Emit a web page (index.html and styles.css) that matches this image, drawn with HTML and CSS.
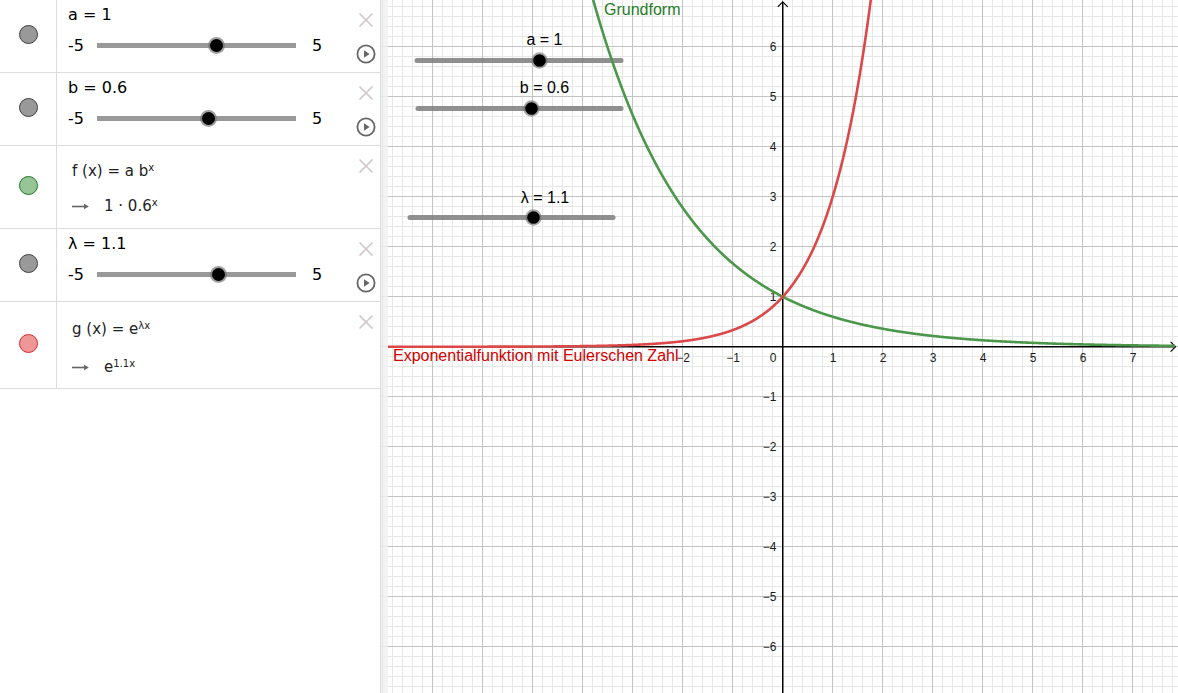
FILE: index.html
```html
<!DOCTYPE html>
<html>
<head>
<meta charset="utf-8">
<title>Exponentialfunktion</title>
<link rel="stylesheet" href="styles.css">
</head>
<body>
<div class="app">
  <div class="algebra">
    <div class="item h73">
      <div class="marble-cell"><span class="marble gray"></span></div>
      <div class="item-main">
        <div class="def">a = 1</div>
        <div class="slider">
          <span class="min">-5</span>
          <span class="track"><span class="knob" style="left:60%"></span></span>
          <span class="max">5</span>
        </div>
      </div>
      <div class="actions">
        <svg class="del" viewBox="0 0 16 16"><path d="M1.5 1.5L14.5 14.5M14.5 1.5L1.5 14.5"/></svg>
        <svg class="play" viewBox="0 0 20 20"><circle cx="10" cy="10" r="8.6"/><path d="M8 6.2L13.6 10L8 13.8Z"/></svg>
      </div>
    </div>
    <div class="item h73">
      <div class="marble-cell"><span class="marble gray"></span></div>
      <div class="item-main">
        <div class="def">b = 0.6</div>
        <div class="slider">
          <span class="min">-5</span>
          <span class="track"><span class="knob" style="left:56%"></span></span>
          <span class="max">5</span>
        </div>
      </div>
      <div class="actions">
        <svg class="del" viewBox="0 0 16 16"><path d="M1.5 1.5L14.5 14.5M14.5 1.5L1.5 14.5"/></svg>
        <svg class="play" viewBox="0 0 20 20"><circle cx="10" cy="10" r="8.6"/><path d="M8 6.2L13.6 10L8 13.8Z"/></svg>
      </div>
    </div>
    <div class="item h83">
      <div class="marble-cell"><span class="marble green"></span></div>
      <div class="item-main">
        <div class="math m1">f (x) = a b<sup>x</sup></div>
        <div class="math m2"><svg class="arrow" viewBox="0 0 17 7"><path class="arrow-line" d="M0 3.5H13"/><path class="arrow-head" d="M12 0.8L16.8 3.5L12 6.2Z"/></svg>1 · 0.6<sup>x</sup></div>
      </div>
      <div class="actions">
        <svg class="del" viewBox="0 0 16 16"><path d="M1.5 1.5L14.5 14.5M14.5 1.5L1.5 14.5"/></svg>
      </div>
    </div>
    <div class="item h73">
      <div class="marble-cell"><span class="marble gray"></span></div>
      <div class="item-main">
        <div class="def">λ = 1.1</div>
        <div class="slider">
          <span class="min">-5</span>
          <span class="track"><span class="knob" style="left:61%"></span></span>
          <span class="max">5</span>
        </div>
      </div>
      <div class="actions">
        <svg class="del" viewBox="0 0 16 16"><path d="M1.5 1.5L14.5 14.5M14.5 1.5L1.5 14.5"/></svg>
        <svg class="play" viewBox="0 0 20 20"><circle cx="10" cy="10" r="8.6"/><path d="M8 6.2L13.6 10L8 13.8Z"/></svg>
      </div>
    </div>
    <div class="item h87">
      <div class="marble-cell"><span class="marble red"></span></div>
      <div class="item-main">
        <div class="math m1 g1">g (x) = e<sup>λx</sup></div>
        <div class="math m2 g2"><svg class="arrow" viewBox="0 0 17 7"><path class="arrow-line" d="M0 3.5H13"/><path class="arrow-head" d="M12 0.8L16.8 3.5L12 6.2Z"/></svg>e<sup>1.1x</sup></div>
      </div>
      <div class="actions">
        <svg class="del" viewBox="0 0 16 16"><path d="M1.5 1.5L14.5 14.5M14.5 1.5L1.5 14.5"/></svg>
      </div>
    </div>
  </div>
  <div class="graphics">
    <svg class="canvas" viewBox="381 0 797 693" xmlns="http://www.w3.org/2000/svg">
      <defs>
        <pattern id="grid" x="782" y="346" width="50" height="50" patternUnits="userSpaceOnUse">
          <rect class="g-bg" width="50" height="50"/>
          <rect class="g-minor" x="10" width="1" height="50"/>
          <rect class="g-minor" x="20" width="1" height="50"/>
          <rect class="g-minor" x="30" width="1" height="50"/>
          <rect class="g-minor" x="40" width="1" height="50"/>
          <rect class="g-minor" y="10" width="50" height="1"/>
          <rect class="g-minor" y="20" width="50" height="1"/>
          <rect class="g-minor" y="30" width="50" height="1"/>
          <rect class="g-minor" y="40" width="50" height="1"/>
          <rect class="g-major" x="0" width="1" height="50"/>
          <rect class="g-major" y="0" width="50" height="1"/>
        </pattern>
      </defs>
      <rect x="381" y="0" width="797" height="693" fill="url(#grid)"/>
      <rect class="strip" x="381" y="0" width="7" height="693"/>

      <line class="axis" x1="388" y1="346.75" x2="1175" y2="346.75"/>
      <line class="axis" x1="782.75" y1="2" x2="782.75" y2="693"/>
      <path class="axis-arrow" d="M777.8 6.8L782.75 1.8L787.7 6.8"/>
      <path class="axis-arrow" d="M1170.6 341.8L1175.6 346.75L1170.6 351.7"/>

      <g class="ticks">
        <text x="733" y="362" class="mid">−1</text>
        <text x="683" y="362" class="mid">−2</text>
        <text x="776.5" y="362" class="end">0</text>
        <text x="833" y="362" class="mid">1</text>
        <text x="883" y="362" class="mid">2</text>
        <text x="933" y="362" class="mid">3</text>
        <text x="983" y="362" class="mid">4</text>
        <text x="1033" y="362" class="mid">5</text>
        <text x="1083" y="362" class="mid">6</text>
        <text x="1133" y="362" class="mid">7</text>
        <text x="776.5" y="301" class="end">1</text>
        <text x="776.5" y="251" class="end">2</text>
        <text x="776.5" y="201" class="end">3</text>
        <text x="776.5" y="151" class="end">4</text>
        <text x="776.5" y="101" class="end">5</text>
        <text x="776.5" y="51" class="end">6</text>
        <text x="776.5" y="401" class="end">−1</text>
        <text x="776.5" y="451" class="end">−2</text>
        <text x="776.5" y="501" class="end">−3</text>
        <text x="776.5" y="551" class="end">−4</text>
        <text x="776.5" y="601" class="end">−5</text>
        <text x="776.5" y="651" class="end">−6</text>
      </g>

      <g class="gslider">
        <line class="gtrack" x1="417" y1="60.5" x2="621" y2="60.5"/>
        <circle class="ghalo" cx="539.5" cy="60.5" r="8.2"/>
        <circle class="gknob" cx="539.5" cy="60.5" r="6.3"/>
        <text class="glabel" x="544.5" y="45">a = 1</text>
      </g>
      <g class="gslider">
        <line class="gtrack" x1="418" y1="108.5" x2="621" y2="108.5"/>
        <circle class="ghalo" cx="531.5" cy="108.5" r="8.2"/>
        <circle class="gknob" cx="531.5" cy="108.5" r="6.3"/>
        <text class="glabel" x="544.5" y="93">b = 0.6</text>
      </g>
      <g class="gslider">
        <line class="gtrack" x1="410" y1="217.5" x2="613" y2="217.5"/>
        <circle class="ghalo" cx="533.5" cy="217.5" r="8.2"/>
        <circle class="gknob" cx="533.5" cy="217.5" r="6.3"/>
        <text class="glabel" x="545" y="203">λ = 1.1</text>
      </g>

      <path id="fcurve" class="curve-f" d=""/>
      <path id="gcurve" class="curve-g" d=""/>

      <text class="lbl-green" x="604" y="15">Grundform</text>
      <text class="lbl-red" x="393" y="361">Exponentialfunktion mit Eulerschen Zahl</text>
    </svg>
  </div>
</div>
<script src="script.js"></script>
</body>
</html>
```

FILE: styles.css
```css
* { box-sizing: border-box; }
html, body { margin: 0; padding: 0; }
body {
  width: 1178px;
  height: 693px;
  overflow: hidden;
  background: #fff;
  font-family: "DejaVu Sans", sans-serif;
  color: #000;
}
.app { display: flex; height: 693px; }

/* Algebra view */
.algebra {
  width: 381px;
  flex: none;
  border-right: 1px solid #dcdcdc;
  background: #fff;
}
.item {
  display: flex;
  border-bottom: 1px solid #dcdcdc;
}
.h73 { height: 73px; }
.h83 { height: 83px; }
.h87 { height: 87px; }
.marble-cell {
  width: 57px;
  flex: none;
  border-right: 1px solid #dcdcdc;
  display: flex;
  align-items: center;
  justify-content: center;
  padding-bottom: 4px;
}
.marble {
  width: 19px;
  height: 19px;
  border-radius: 50%;
  border: 1px solid #444;
}
.marble.gray { background: #999; border-color: #3d3d3d; }
.marble.green { background: #98c598; border-color: #1d7a1d; }
.marble.red { background: #ef9797; border-color: #d42a2a; }

.item-main { flex: 1; padding-left: 11px; }
.def { font-size: 16px; line-height: 20px; padding-top: 5px; }
.slider {
  display: flex;
  align-items: center;
  height: 20px;
  margin-top: 10px;
  font-size: 16px;
}
.min { width: 29px; }
.track {
  position: relative;
  width: 199px;
  height: 5px;
  background: #999;
}
.knob {
  position: absolute;
  top: 50%;
  width: 13px;
  height: 13px;
  margin: -6.5px 0 0 -6.5px;
  border-radius: 50%;
  background: #000;
  box-shadow: 0 0 0 2px rgba(110, 110, 110, 0.65);
}
.max { margin-left: 16px; }

.actions {
  width: 24px;
  margin-right: 2px;
  flex: none;
  display: flex;
  flex-direction: column;
  align-items: center;
  padding-top: 12px;
}
.del { width: 16px; height: 16px; display: block; }
.del path { stroke: #d2c6c6; stroke-width: 1.7; fill: none; }
.play { width: 20px; height: 20px; display: block; margin-top: 16px; }
.play circle { fill: none; stroke: #666; stroke-width: 1.8; }
.play path { fill: #666; }

.math { font-size: 15px; line-height: 20px; color: #222; white-space: nowrap; padding-left: 4px; }
.m1 { padding-top: 15px; }
.m2 { margin-top: 15px; }
.g1 { padding-top: 17px; }
.g2 { margin-top: 18px; }
.math sup { font-size: 10px; line-height: 0; vertical-align: 5px; }
.arrow { width: 17px; height: 7px; margin-right: 15px; vertical-align: 1px; }
.arrow-line { stroke: #666; stroke-width: 1.6; fill: none; }
.arrow-head { fill: #666; }

/* Graphics view */
.graphics { flex: 1; }
.canvas { display: block; width: 797px; height: 693px; }
.g-bg { fill: #fff; }
.g-minor { fill: #e7e7e7; }
.g-major { fill: #c3c3c3; }
.strip { fill: #f0f0f0; fill-opacity: 0.8; }
.axis { stroke: #000; stroke-width: 1.5; }
.axis-arrow { fill: none; stroke: #000; stroke-width: 1.1; }
.ticks text { font-family: "Liberation Sans", Arial, sans-serif; font-size: 12px; fill: #1a1a1a; }
.ticks .mid { text-anchor: middle; }
.ticks .end { text-anchor: end; }
.gtrack { stroke: #7d7d7d; stroke-opacity: 0.85; stroke-width: 5; stroke-linecap: round; }
.ghalo { fill: #6e6e6e; fill-opacity: 0.6; }
.gknob { fill: #000; }
.glabel { font-family: "Liberation Sans", Arial, sans-serif; font-size: 16px; fill: #000; text-anchor: middle; }
.curve-f { fill: none; stroke: #4a974a; stroke-width: 2.6; stroke-linejoin: round; }
.curve-g { fill: none; stroke: #dc4848; stroke-width: 2.6; stroke-linejoin: round; }
.lbl-green { font-family: "Liberation Sans", Arial, sans-serif; font-size: 16px; fill: #1f7d1f; }
.lbl-red { font-family: "Liberation Sans", Arial, sans-serif; font-size: 16px; fill: #d20000; }
```

FILE: script.js
```js
(function () {
  var ox = 782.75, oy = 346.75, u = 50;
  function build(fn, a, b) {
    var d = '';
    for (var px = a; px <= b; px += 0.5) {
      var x = (px - ox) / u;
      var y = oy - u * fn(x);
      if (y < -40) {
        if (d === '') { continue; }
        d += 'L' + px.toFixed(2) + ' -40';
        break;
      }
      d += (d ? 'L' : 'M') + px.toFixed(2) + ' ' + y.toFixed(2);
    }
    return d;
  }
  document.getElementById('fcurve').setAttribute('d', build(function (x) { return Math.pow(0.6, x); }, 388, 1175));
  document.getElementById('gcurve').setAttribute('d', build(function (x) { return Math.exp(1.1 * x); }, 388, 1178));
})();
```
